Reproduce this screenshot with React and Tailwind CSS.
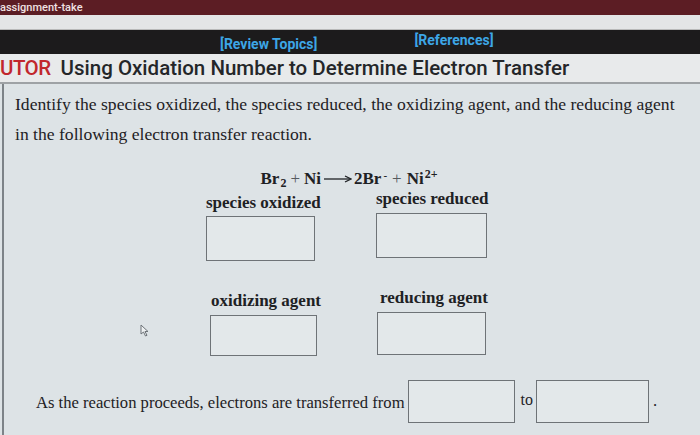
// Electron transfer question page (photo of an OWL-style tutor screen)
export default function App() {
  const serif = { fontFamily: '"Liberation Serif", "Times New Roman", serif' };

  return (
    <div className="w-[700px] h-[435px] overflow-hidden bg-[#dde3e6] flex flex-col">
      {/* Browser tab strip */}
      <div className="h-[15px] bg-[#5c1d24] flex items-center">
        <span className="text-[11px] leading-[13px] text-[#f0e2e2] font-['Roboto',sans-serif] font-medium">
          assignment-take
        </span>
      </div>
      <div className="h-[15px] bg-[#e4e5e6] border-b border-[#b9b9b9]" />

      {/* Black toolbar with links */}
      <div className="h-[24px] bg-[#1c1b1c] flex items-center font-['Roboto',sans-serif] font-bold text-[14px] text-[#3da6e6]">
        <span className="ml-[220px] mt-[4px]">[Review Topics]</span>
        <span className="ml-[97px] -mt-[4px]">[References]</span>
      </div>

      {/* Title */}
      <div className="h-[30px] bg-[#e8eaeb] border-b-2 border-[#9ea2a5] flex items-center font-['Roboto',sans-serif] text-[20.5px] font-medium">
        <span className="text-[#c1272d] tracking-tight">UTOR</span>
        <span className="ml-[10px] text-[#242629]">Using Oxidation Number to Determine Electron Transfer</span>
      </div>

      {/* Question body */}
      <div className="flex-1 ml-[2px] border-l-2 border-[#7d8388] bg-[#dde3e6] text-[#1e2124] relative" style={serif}>
        <p className="pl-[11px] pr-[14px] pt-[5px] text-[17.6px] leading-[30px]">
          Identify the species oxidized, the species reduced, the oxidizing agent, and the reducing agent in the following electron transfer reaction.
        </p>

        <div className="mt-[20px] flex justify-center font-bold text-[17px] leading-[20px] pr-[6px]">
          <span className="flex items-baseline">
            <span>Br<sub className="text-[12px] ml-[1px]">2</sub></span>
            <span className="mx-[4px] font-normal text-[#555a5e]">+</span>
            <span>Ni</span>
            <svg className="ml-[3px] mr-[2px] self-center" width="28" height="10" viewBox="0 0 28 10">
              <path d="M0 5 H26" stroke="#1e2124" strokeWidth="1.3" />
              <path d="M21 2 L27 5 L21 8" fill="none" stroke="#1e2124" strokeWidth="1.3" />
            </svg>
            <span>2Br<sup className="text-[11px] ml-[2px]">-</sup></span>
            <span className="mx-[5px] font-normal text-[#555a5e]">+</span>
            <span>Ni<sup className="text-[12px] ml-[1px]">2+</sup></span>
          </span>
        </div>

        <div className="flex justify-center gap-[54px] font-bold text-[17px] leading-[20px] pr-[6px]">
          <div className="w-[116px] flex flex-col">
            <span className="pt-[4px]">species oxidized</span>
            <div className="mt-[3px] h-[45px] w-[109px] border border-[#6e7377] bg-[#e3e8ea]" />
            <span className="mt-[30px] pl-[5px]">oxidizing agent</span>
            <div className="mt-[4px] ml-[4px] h-[41px] w-[107px] border border-[#6e7377] bg-[#e3e8ea]" />
          </div>
          <div className="w-[116px] flex flex-col">
            <span>species reduced</span>
            <div className="mt-[4px] h-[45px] w-[111px] border border-[#6e7377] bg-[#e3e8ea]" />
            <span className="mt-[30px] pl-[4px]">reducing agent</span>
            <div className="mt-[4px] ml-[1px] h-[43px] w-[109px] border border-[#6e7377] bg-[#e3e8ea]" />
          </div>
        </div>

        {/* mouse cursor */}
        <svg className="absolute left-[136px] top-[240px]" width="9" height="13" viewBox="0 0 9 13">
          <path d="M1 1 L1 10 L3.5 8 L5.5 12 L7 11.3 L5 7.5 L8 7.5 Z" fill="#eef1f2" stroke="#6d7378" strokeWidth="1" />
        </svg>

        <div className="mt-[24px] flex items-center text-[16.6px]">
          <span className="ml-[32px] mt-[4px]">As the reaction proceeds, electrons are transferred from</span>
          <div className="ml-[3px] h-[43px] w-[107px] border border-[#6e7377] bg-[#e3e8ea]" />
          <span className="ml-[6px] mb-[4px] text-[16px]">to</span>
          <div className="ml-[3px] h-[43px] w-[113px] border border-[#6e7377] bg-[#e3e8ea]" />
          <span className="ml-[4px]">.</span>
        </div>
      </div>
    </div>
  );
}
